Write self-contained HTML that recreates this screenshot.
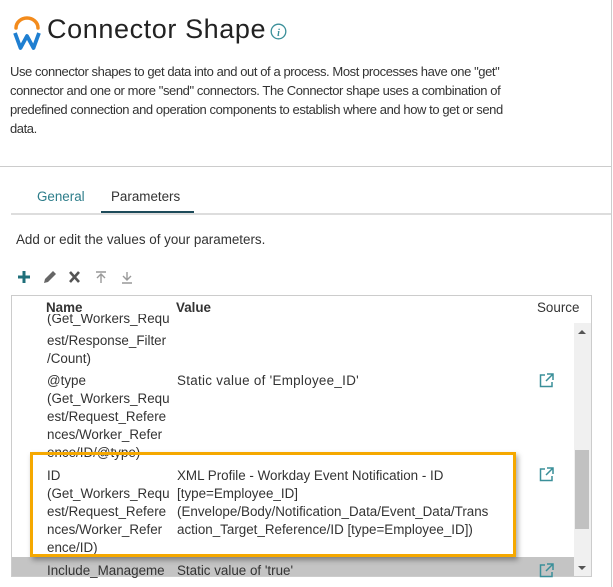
<!DOCTYPE html>
<html><head><meta charset="utf-8"><style>
*{margin:0;padding:0;box-sizing:border-box}
body{width:613px;height:587px;background:#fff;position:relative;overflow:hidden;font-family:"Liberation Sans",sans-serif;color:#333;font-size:13.4px}
.a{position:absolute;white-space:nowrap}
.t{font-size:13.4px;line-height:18px}
</style></head><body>
<div class="a" style="left:611px;top:0;width:1px;height:587px;background:#ccc"></div>
<svg class="a" style="left:12px;top:16px" width="30" height="34" viewBox="0 0 30 34">
<path d="M4 12 A11 10 0 0 1 26 12" fill="none" stroke="#f38b1c" stroke-width="3.5" stroke-linecap="round"/>
<path d="M3 17 L8.5 32 L15 20 L21.5 32 L27 17" fill="none" stroke="#1f7fd1" stroke-width="3.8" stroke-linejoin="round"/>
</svg>
<div class="a" style="left:47px;top:14px;font-size:27px;color:#222;letter-spacing:0.6px">Connector Shape</div>
<svg class="a" style="left:270px;top:23px" width="17" height="17" viewBox="0 0 17 17"><circle cx="8.5" cy="8.5" r="7.3" fill="none" stroke="#3a8f99" stroke-width="1.3"/><text x="8.5" y="13" font-size="10" font-style="italic" font-weight="bold" font-family="Liberation Serif" text-anchor="middle" fill="#3a8f99">i</text></svg>
<div class="a" style="left:10px;top:62px;font-size:13px;line-height:19px;color:#333;letter-spacing:-0.42px">
<div>Use connector shapes to get data into and out of a process. Most processes have one "get"</div>
<div>connector and one or more "send" connectors. The Connector shape uses a combination of</div>
<div>predefined connection and operation components to establish where and how to get or send</div>
<div>data.</div></div>
<div class="a" style="left:0;top:166px;width:611px;height:1px;background:#ccc"></div>
<div class="a" style="left:37px;top:189px;font-size:13.4px;color:#2d7d8a">General</div>
<div class="a" style="left:111px;top:189px;font-size:13.4px;color:#333">Parameters</div>
<div class="a" style="left:11px;top:213px;width:600px;height:2px;background:#ddd"></div>
<div class="a" style="left:101px;top:211px;width:93px;height:2px;background:#1d4b5a"></div>
<div class="a" style="left:16px;top:232px;color:#333">Add or edit the values of your parameters.</div>
<svg class="a" style="left:14px;top:268px" width="125" height="18" viewBox="0 0 125 18">
<path d="M10 3v12M4 9h12" stroke="#1f6f7a" stroke-width="3"/>
<path d="M30 15l1-4 8-8 3 3-8 8z" fill="#666"/>
<path d="M56 4l9 10M65 4l-9 10" stroke="#555" stroke-width="2.6"/>
<path d="M82 4h10M87 15V7M83 10l4-4 4 4" stroke="#999" stroke-width="1.4" fill="none"/>
<path d="M108 15h10M113 4v8M109 8l4 4 4-4" stroke="#999" stroke-width="1.4" fill="none"/>
</svg>
<div class="a" style="left:11px;top:295px;width:581px;height:282px;border:1px solid #ccc;overflow:hidden">
<div class="a" style="left:0;top:261px;width:562px;height:20px;background:#c4c4c4"></div>
<div class="a" style="left:562px;top:27px;width:17px;height:254px;background:#f0f0f0"></div>
<div class="a" style="left:563px;top:154px;width:14px;height:79px;background:#c1c1c1"></div>
<div class="a" style="left:566px;top:34px;width:0;height:0;border-left:4px solid transparent;border-right:4px solid transparent;border-bottom:4px solid #555"></div>
<div class="a" style="left:566px;top:270px;width:0;height:0;border-left:4px solid transparent;border-right:4px solid transparent;border-top:4px solid #555"></div>
</div>
<div class="a" style="left:46px;top:300px;font-weight:bold;color:#333">Name</div>
<div class="a" style="left:176px;top:300px;font-weight:bold;color:#333">Value</div>
<div class="a" style="left:537px;top:300px;color:#333">Source</div>
<div class="a t" style="left:47px;top:314px;height:16px;overflow:hidden"><div style="margin-top:-4px">(Get_Workers_Requ</div></div>
<div class="a t" style="left:47px;top:332px">est/Response_Filter<br>/Count)</div>
<div class="a t" style="left:47px;top:372px">@type<br>(Get_Workers_Requ<br>est/Request_Refere<br>nces/Worker_Refer<br>ence/ID/@type)</div>
<div class="a t" style="left:177px;top:372px;letter-spacing:0.3px">Static value of 'Employee_ID'</div>
<div class="a t" style="left:47px;top:467px">ID<br>(Get_Workers_Requ<br>est/Request_Refere<br>nces/Worker_Refer<br>ence/ID)</div>
<div class="a t" style="left:177px;top:467px">XML Profile - Workday Event Notification - ID<br>[type=Employee_ID]<br>(Envelope/Body/Notification_Data/Event_Data/Trans<br>action_Target_Reference/ID [type=Employee_ID])</div>
<div class="a t" style="left:47px;top:562px">Include_Manageme</div>
<div class="a t" style="left:177px;top:562px">Static value of 'true'</div>
<div class="a" style="left:30px;top:452px;width:486px;height:105px;border:3px solid #f5a800;box-shadow:2px 3px 5px rgba(0,0,0,0.35)"></div>
<svg class="a" style="left:539px;top:373px" width="15" height="15" viewBox="0 0 15 15"><path d="M6 2H1.5v11.5H13V9M8 1h6v6M14 1L7 8" fill="none" stroke="#3a8f99" stroke-width="1.5"/></svg>
<svg class="a" style="left:539px;top:467px" width="15" height="15" viewBox="0 0 15 15"><path d="M6 2H1.5v11.5H13V9M8 1h6v6M14 1L7 8" fill="none" stroke="#3a8f99" stroke-width="1.5"/></svg>
<svg class="a" style="left:539px;top:563px" width="15" height="15" viewBox="0 0 15 15"><path d="M6 2H1.5v11.5H13V9M8 1h6v6M14 1L7 8" fill="none" stroke="#3a8f99" stroke-width="1.5"/></svg>
</body></html>
